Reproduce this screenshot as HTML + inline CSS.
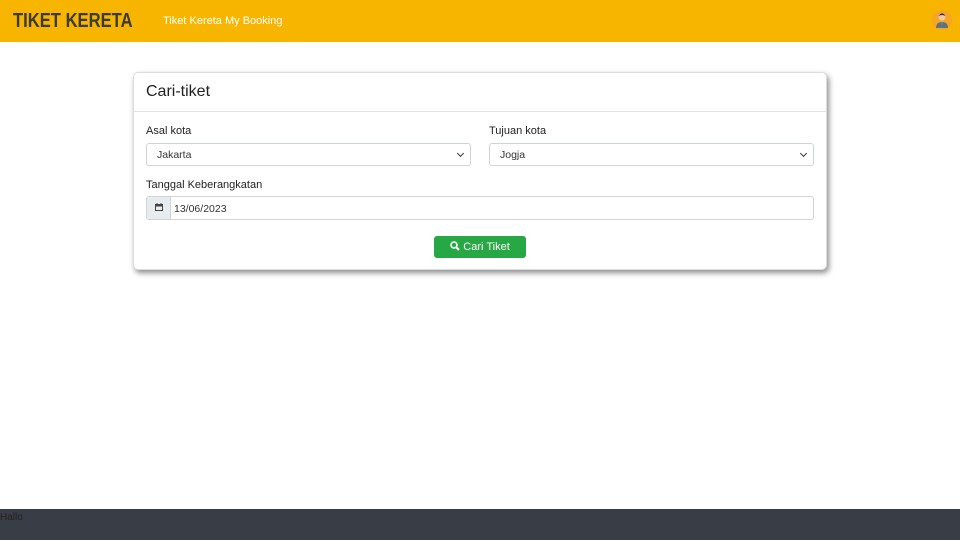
<!DOCTYPE html>
<html><head><meta charset="utf-8"><style>
*{box-sizing:border-box;margin:0;padding:0}
body{width:960px;height:540px;position:relative;background:#fff;font-family:"Liberation Sans",sans-serif;color:#212529;overflow:hidden}
.nav{position:absolute;left:0;top:0;width:960px;height:42px;background:#f7b500}
.brand{position:absolute;left:13px;top:10px;font-size:20px;font-weight:bold;color:#3a3a3a;transform:scaleX(0.83);transform-origin:left}
.link{position:absolute;top:15px;font-size:11px;color:#fff}
.av{position:absolute;left:932px;top:10px;width:20px;height:20px;border-radius:50%;background:#f5a623}
.card{position:absolute;left:133px;top:72px;width:694px;height:198px;border:1px solid #ddd;border-radius:5px;box-shadow:2px 3px 6px rgba(0,0,0,.45);background:#fff}
.hd{height:39px;border-bottom:1px solid #e3e3e3;padding:10px 12px;font-size:16px;color:#222}
.lbl{position:absolute;font-size:11px;color:#222}
.sel{position:absolute;height:23px;border:1px solid #ced4da;border-radius:3px;font-size:10.5px;padding:5px 10px;color:#333}
.sel:after{content:"";position:absolute;right:7px;top:7px;width:4px;height:4px;border-right:1px solid #333;border-bottom:1px solid #333;transform:rotate(45deg)}
.date{position:absolute;left:12px;top:123px;width:668px;height:24px;border:1px solid #ced4da;border-radius:3px;font-size:10.5px}
.ic{position:absolute;left:0;top:0;width:24px;height:22px;background:#e9ecef;border-right:1px solid #ced4da}
.btn{position:absolute;left:300px;top:163px;width:92px;height:22px;background:#28a745;border-radius:3px;color:#fff;font-size:11px;text-align:center;line-height:22px}
.foot{position:absolute;left:0;top:509px;width:960px;height:31px;background:#393d45;color:#222;font-size:10px;padding-top:3px}
</style></head><body>
<div class="nav"><div class="brand">TIKET KERETA</div>
<div class="link" style="left:163px">Tiket Kereta</div><div class="link" style="left:225px">My Booking</div>
<div class="av"><svg width="20" height="20"><circle cx="10" cy="7" r="3.5" fill="#f3c9a0"/><path d="M6.5 6 Q10 1 13.5 6 Q10 4 6.5 6Z" fill="#222"/><path d="M4 18 Q4 12 10 12 Q16 12 16 18Z" fill="#607080"/><path d="M9.3 12 L10 16 L10.7 12Z" fill="#3aa"/></svg></div></div>
<div class="card"><div class="hd">Cari-tiket</div>
<div class="lbl" style="left:12px;top:52px">Asal kota</div>
<div class="lbl" style="left:355px;top:52px">Tujuan kota</div>
<div class="sel" style="left:12px;top:70px;width:325px">Jakarta</div>
<div class="sel" style="left:355px;top:70px;width:325px">Jogja</div>
<div class="lbl" style="left:12px;top:106px">Tanggal Keberangkatan</div>
<div class="date"><div class="ic"><svg width="24" height="22"><rect x="8" y="7" width="8" height="7" fill="#444"/><rect x="9" y="9.5" width="6" height="3.5" fill="#e9ecef"/><rect x="9.5" y="6" width="1" height="2" fill="#444"/><rect x="13.5" y="6" width="1" height="2" fill="#444"/></svg></div><span style="position:absolute;left:27px;top:6px;color:#333">13/06/2023</span></div>
<div class="btn"><svg width="10" height="10" style="vertical-align:-1px"><circle cx="4" cy="4" r="3" fill="none" stroke="#fff" stroke-width="1.6"/><path d="M6 6 L9 9" stroke="#fff" stroke-width="2"/></svg> Cari Tiket</div>
</div>
<div class="foot">Hallo</div>
</body></html>
